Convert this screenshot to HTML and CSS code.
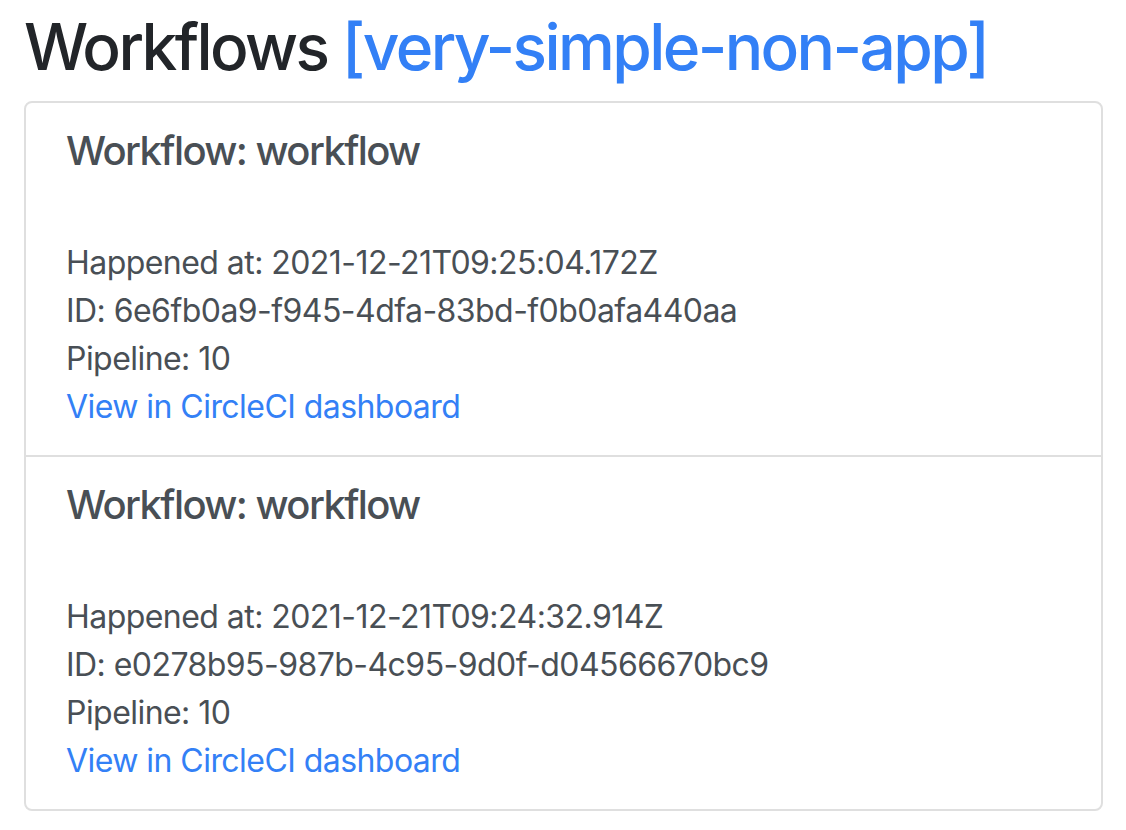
FILE: index.html
```html
<!DOCTYPE html>
<html lang="en">
<head>
<meta charset="utf-8">
<title>Workflows</title>
<link rel="stylesheet" href="styles.css">
</head>
<body>
<main class="page">
  <h2 class="page-title">Workflows <a class="project" href="#">[very-simple-non-app]</a></h2>
  <ul class="list-group">
    <li class="list-item">
      <h5 class="item-title">Workflow: workflow</h5>
      <div class="spacer"></div>
      <p class="line">Happened at: 2021-12-21T09:25:04.172Z</p>
      <p class="line">ID: 6e6fb0a9-f945-4dfa-83bd-f0b0afa440aa</p>
      <p class="line">Pipeline: 10</p>
      <p class="line"><a class="link" href="#">View in CircleCI dashboard</a></p>
    </li>
    <li class="list-item">
      <h5 class="item-title">Workflow: workflow</h5>
      <div class="spacer"></div>
      <p class="line">Happened at: 2021-12-21T09:24:32.914Z</p>
      <p class="line">ID: e0278b95-987b-4c95-9d0f-d04566670bc9</p>
      <p class="line">Pipeline: 10</p>
      <p class="line"><a class="link" href="#">View in CircleCI dashboard</a></p>
    </li>
  </ul>
</main>
</body>
</html>
```

FILE: styles.css
```css
html, body {
  margin: 0;
  padding: 0;
  background: #ffffff;
}

body {
  font-family: Inter, "Liberation Sans", Arial, sans-serif;
  color: #212529;
  font-size: 32px;
  line-height: 1.5;
}

.page {
  padding: 9px 23px 0 24px;
}

.page-title {
  margin: 0 0 15px 0;
  font-size: 64px;
  font-weight: 500;
  line-height: 1.2;
  letter-spacing: -2.6px;
  color: #222529;
}

.project {
  color: #3380f6;
  text-decoration: none;
}

.list-group {
  list-style: none;
  margin: 0;
  padding: 0;
  border: 2px solid #dfdfdf;
  border-radius: 8px;
  display: flex;
  flex-direction: column;
}

.list-item {
  padding: 24px 40px 24px 40px;
  color: #494f55;
}

.list-item + .list-item {
  border-top: 2px solid #dfdfdf;
}

.item-title {
  margin: 0 0 16px 0;
  font-size: 40px;
  font-weight: 500;
  line-height: 1.2;
  letter-spacing: -1.6px;
  color: #494f55;
}

.spacer {
  height: 48px;
}

.line {
  margin: 0;
  line-height: 48px;
  letter-spacing: -0.55px;
}

.link {
  color: #3380f6;
  text-decoration: none;
}
```
